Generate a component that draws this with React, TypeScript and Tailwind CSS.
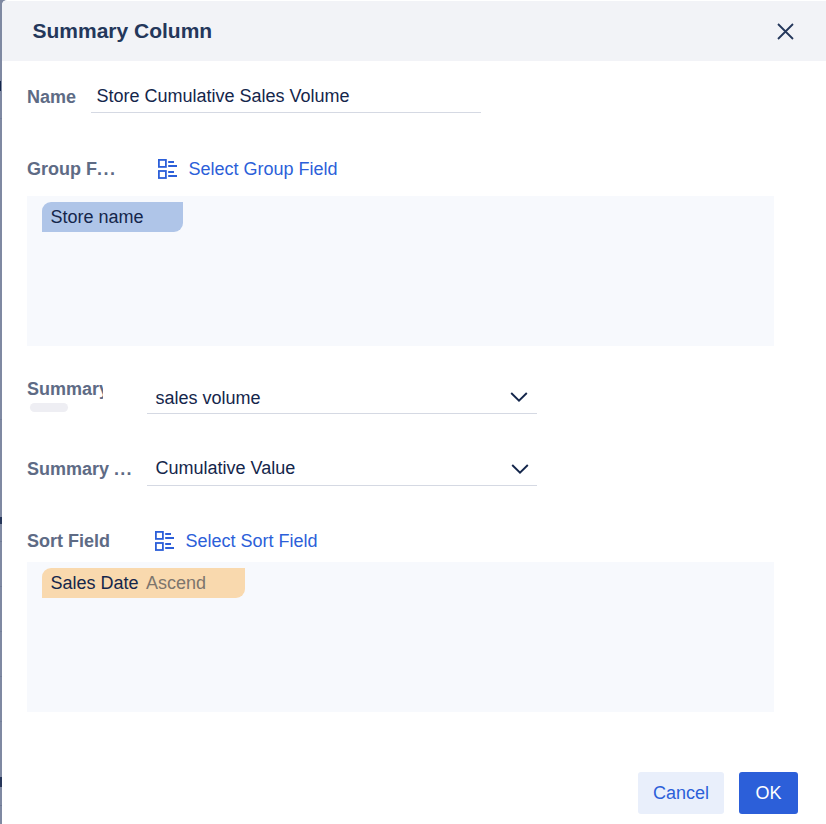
import type { ReactNode } from "react";

function FieldListIcon() {
  return (
    <svg width="20" height="20" viewBox="0 0 20 20" fill="none" stroke="#2c5fd9" className="shrink-0">
      <rect x="1.9" y="0.9" width="7" height="7" strokeWidth="1.8" />
      <rect x="1.9" y="12" width="7" height="7" strokeWidth="1.8" />
      <path d="M11.2 3H17M11.2 7H20M11.2 13H17M11.2 17H20" strokeWidth="1.8" />
    </svg>
  );
}

function Chevron({ className }: { className: string }) {
  return (
    <svg width="18" height="10" viewBox="0 0 18 10" fill="none" stroke="#14264b" strokeWidth="1.9" className={className}>
      <path d="M1.2 1L9 8.6L16.8 1" />
    </svg>
  );
}

function Label({ children, className }: { children: ReactNode; className: string }) {
  return <div className={`shrink-0 whitespace-nowrap font-bold text-[#5e6b85] ${className}`}>{children}</div>;
}

function SelectLink({ children }: { children: ReactNode }) {
  return (
    <button className="flex items-center text-[#2c5fd9]">
      <FieldListIcon />
      <span className="ml-[11.5px]">{children}</span>
    </button>
  );
}

/* Sliver of the dimmed page that stays visible beside the dialog. */
function PageEdge() {
  return (
    <div className="flex w-0.5 shrink-0 flex-col bg-[#7f89a2]">
      <div className="mt-[81px] h-[10px] w-px bg-[#14264b]" />
      <div className="mt-[27px] h-px bg-[#737e98]" />
      <div className="mt-[300px] h-px bg-[#737e98]" />
      <div className="mt-[97px] h-[7px] bg-[#26365a]" />
      <div className="mt-[17px] h-px bg-[#6f7a95]" />
      <div className="mt-[44px] h-px bg-[#737e98]" />
      <div className="mt-[44px] h-px bg-[#737e98]" />
      <div className="mt-[44px] h-px bg-[#737e98]" />
      <div className="mt-[44px] h-px bg-[#737e98]" />
      <div className="mt-[55px] h-[10px] bg-[#26365a]" />
      <div className="mt-[18px] h-px bg-[#6f7a95]" />
    </div>
  );
}

export default function App() {
  return (
    <div className="flex h-[824px] w-[826px] overflow-hidden bg-[#7f89a2] font-['Liberation_Sans',Arial,sans-serif] text-lg leading-6 text-[#14264b]">
      <PageEdge />
      <div className="flex w-[824px] flex-col overflow-hidden rounded-tl-[5px] bg-white pt-px">
        <header className="flex h-[60px] shrink-0 items-center justify-between bg-[#f2f3f7] pl-[30.5px] pr-8">
          <h1 className="text-[21px] font-bold text-[#24375b]">Summary Column</h1>
          <svg width="17" height="17" viewBox="0 0 17 17" fill="none" stroke="#24375b" strokeWidth="1.8">
            <path d="M1 1L16 16M16 1L1 16" />
          </svg>
        </header>

        <div className="ml-[25px] mt-[23px] flex h-[29px]">
          <Label className="w-16 pt-px">Name</Label>
          <div className="h-[29px] w-[390px] border-b border-[#d5d9e3] pl-[5.5px]">Store Cumulative Sales Volume</div>
        </div>

        <div className="ml-[25px] mt-11 flex h-6">
          <Label className="w-[130px]">
            Group F<span className="tracking-[1.5px]">...</span>
          </Label>
          <SelectLink>Select Group Field</SelectLink>
        </div>
        <div className="ml-[25px] mt-[15px] h-[150px] w-[747px] shrink-0 bg-[#f7f9fd] pl-[15px] pt-1.5">
          <div className="h-[30px] w-[141px] rounded-br-[9px] rounded-tl-[9px] bg-[#afc5e8] pl-[8.5px] pt-[3px]">Store name</div>
        </div>

        <div className="ml-[25px] mt-[31px] flex h-[37px]">
          <div className="w-[120px]">
            <Label className="w-[75.5px] overflow-hidden">Summary</Label>
            <div className="ml-[3px] mt-0.5 h-[9px] w-[38px] rounded-full bg-[#eeeef3]" />
          </div>
          <div className="flex w-[390px] justify-between border-b border-[#d5d9e3] pl-[8.5px] pr-[9.5px] pt-[9px]">
            <span>sales volume</span>
            <Chevron className="mt-1.5" />
          </div>
        </div>

        <div className="ml-[25px] mt-[42px] flex h-[30px]">
          <Label className="w-[120px] pt-px">
            Summary <span className="tracking-[1.2px]">...</span>
          </Label>
          <div className="flex w-[390px] justify-between border-b border-[#d5d9e3] pl-[8.5px] pr-2">
            <span>Cumulative Value</span>
            <Chevron className="mt-2" />
          </div>
        </div>

        <div className="ml-[25px] mt-[43px] flex h-6">
          <Label className="w-[127px]">Sort Field</Label>
          <SelectLink>Select Sort Field</SelectLink>
        </div>
        <div className="ml-[25px] mt-[9px] h-[150px] w-[747px] shrink-0 bg-[#f7f9fd] pl-[15px] pt-1.5">
          <div className="h-[30px] w-[203px] rounded-br-[9px] rounded-tl-[9px] bg-[#f9d9ae] pl-[8.5px] pt-[3px]">
            Sales Date<span className="ml-[7.5px] text-[#7d756d]">Ascend</span>
          </div>
        </div>

        <footer className="mt-[60px] flex justify-end gap-[15px] pr-7">
          <button className="h-[42px] w-[86px] rounded-[3px] bg-[#e9effb] text-[#2c5fd9]">Cancel</button>
          <button className="h-[42px] w-[59px] rounded-[3px] bg-[#2c5fd9] text-white">OK</button>
        </footer>
      </div>
    </div>
  );
}
